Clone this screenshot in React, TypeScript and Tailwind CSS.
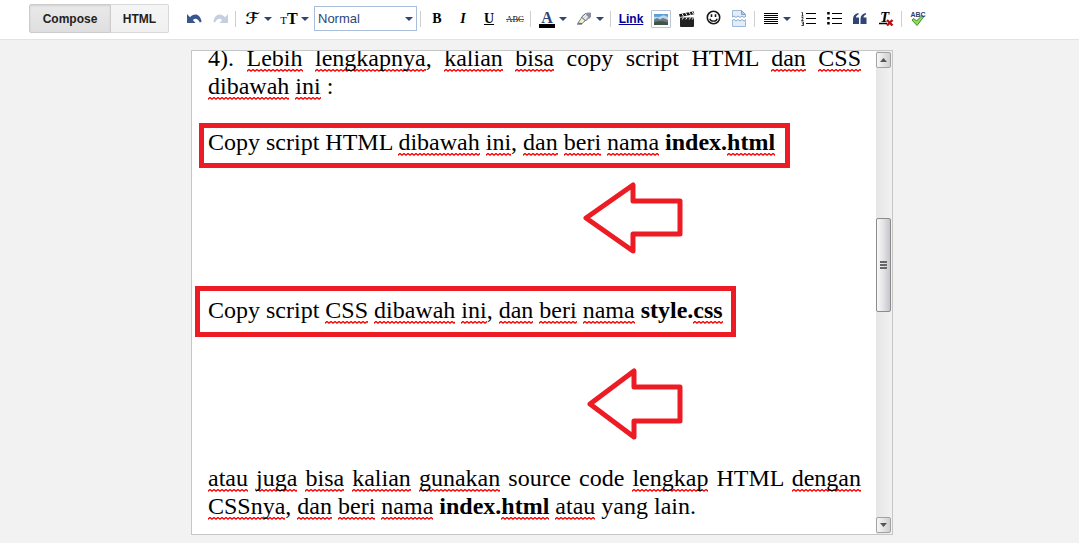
import type { ReactNode } from "react";

const NAVY = "#2f4575";

function Separator() {
  return <span className="ml-0.5 mr-[3px] h-4 w-px shrink-0 bg-[#cfcfcf]" />;
}

function Tool({ label, children }: { label: string; children: ReactNode }) {
  return (
    <button type="button" aria-label={label} className="flex h-6 w-[26px] shrink-0 items-center justify-center">
      {children}
    </button>
  );
}

function Caret() {
  return (
    <svg width="8" height="4" viewBox="0 0 8 4" fill={NAVY} aria-hidden="true">
      <path d="M0 0h8L4 4z" />
    </svg>
  );
}

function MenuTool({ label, children }: { label: string; children: ReactNode }) {
  return (
    <button type="button" aria-label={label} className="flex h-6 w-[37px] shrink-0 items-center justify-end gap-1 pr-1">
      <span className="flex w-4 justify-center">{children}</span>
      <Caret />
    </button>
  );
}

function Undo({ color }: { color: string }) {
  return (
    <svg width="15" height="10" viewBox="0 0 15 10" fill={color}>
      <path d="M0 0v9h8.500L5.800 6C8 3.800 11 4 12.800 8.500l1.800-.8C13.800 2.800 11 .6 8.500.6 6.300.6 4.500 1.700 3 3.200z" />
    </svg>
  );
}

function ListIcon({ numbered }: { numbered?: boolean }) {
  return (
    <svg width="15" height="15" viewBox="0 0 15 15">
      <path d="M5 2.500h10M5 7.500h10M5 12.500h10" stroke="#000" strokeWidth="1" />
      {numbered ? (
        <path
          d="M.5 1.500h1V5M.5 5h2M.5 6.500h1.500v1L.5 9.500h2M.5 11h2v3.500h-2M1 12.800h1"
          fill="none"
          stroke="#222"
          strokeWidth=".9"
        />
      ) : (
        <path d="M.2 1h2.500v2.500H.2zM.2 6h2.500v2.500H.2zM.2 11h2.500v2.500H.2z" fill="#000" />
      )}
    </svg>
  );
}

function Toolbar() {
  return (
    <header className="flex items-center overflow-hidden border-b border-[#e3e3e3] bg-white pb-1.5 pl-[29px] pt-1">
      <div className="flex h-[29px] shrink-0 text-xs font-bold text-[#222]">
        <button
          type="button"
          aria-pressed="true"
          className="w-[82px] rounded-l-xs border border-[#cccccc] bg-linear-to-b from-[#e9e9e9] to-[#dfdfdf] shadow-[inset_0_1px_2px_rgba(0,0,0,0.1)]"
        >
          Compose
        </button>
        <button
          type="button"
          className="w-[58px] rounded-r-xs border border-l-0 border-[#d8d8d8] bg-linear-to-b from-[#f5f5f5] to-[#f0f0f0]"
        >
          HTML
        </button>
      </div>

      <div className="ml-3 flex items-center">
        <Tool label="Undo">
          <Undo color="#39568f" />
        </Tool>
        <Tool label="Redo">
          <span className="-scale-x-100">
            <Undo color="#c6cfdf" />
          </span>
        </Tool>
        <Separator />
        <MenuTool label="Font">
          <span className="font-['DejaVu_Sans',sans-serif] text-base leading-none font-bold text-black">ℱ</span>
        </MenuTool>
        <MenuTool label="Font size">
          <span className="flex items-baseline font-['Liberation_Serif',serif] leading-none text-black">
            <span className="text-[11px] leading-none">T</span>
            <span className="text-base leading-none font-bold">T</span>
          </span>
        </MenuTool>
        <div className="relative mx-px shrink-0">
          <select
            aria-label="Paragraph format"
            className="block h-[25px] w-[103px] appearance-none border border-[#a9bedb] bg-white pl-[3px] text-[13px] text-[#2f4575]"
          >
            <option>Normal</option>
          </select>
          <span className="pointer-events-none absolute inset-y-0 right-1 flex items-center">
            <Caret />
          </span>
        </div>
        <Separator />
        <Tool label="Bold">
          <span className="font-['Liberation_Serif',serif] text-sm font-bold text-black">B</span>
        </Tool>
        <Tool label="Italic">
          <span className="font-['Liberation_Serif',serif] text-sm font-bold text-black italic">I</span>
        </Tool>
        <Tool label="Underline">
          <span className="font-['Liberation_Serif',serif] text-sm font-bold text-black underline">U</span>
        </Tool>
        <Tool label="Strikethrough">
          <svg width="18" height="14" viewBox="0 0 18 14">
            <text x="9" y="10" textAnchor="middle" fontFamily="Liberation Serif, serif" fontSize="8.500">
              ABC
            </text>
            <path d="M0 7.500h18" stroke="#3b5c9c" />
          </svg>
        </Tool>
        <Separator />
        <MenuTool label="Text color">
          <svg width="16" height="24" viewBox="0 0 16 24">
            <text x="8" y="16" textAnchor="middle" fontFamily="Liberation Serif, serif" fontSize="16" fontWeight="bold" fill={NAVY}>
              A
            </text>
            <path d="M0 17h16v4H0z" />
          </svg>
        </MenuTool>
        <MenuTool label="Highlight color">
          <svg width="14" height="14" viewBox="0 0 14 14">
            <path d="M1 11 5 5l3.500 3.500L5 11.500z" fill="#fbf3b4" stroke="#6e7fa3" />
            <path d="M4.500 5 8.500 1.500l4 3.500-4 4z" fill="#cfd4dc" stroke="#566480" />
            <path d="m8.500 1.500 2-1L14 .8v4L12 7z" fill="#8a8f99" />
            <path d="m6 5.500 3-3M7.500 7l3-3" stroke="#fff" />
            <path d="M0 12h5" stroke={NAVY} />
          </svg>
        </MenuTool>
        <Separator />
        <a href="#link" className="w-[34px] shrink-0 text-center text-xs font-bold text-[#000099] underline">
          Link
        </a>
        <Tool label="Insert image">
          <svg width="20" height="18" viewBox="0 0 20 18">
            <path d="M.5.5h19v17H.5z" fill="#fff" stroke="#bac6d6" />
            <path d="M3 4h14v11H3z" fill="#5d9fd6" />
            <path d="M3 7c3-1 4 1 7-1s5 0 7 1v4H3z" fill="#b9d6ea" />
            <path d="M3 9.500 6 8l3 1.500L12 8l5 2v3H3z" fill="#6d7a80" />
            <path d="M3 12.500c5-2 9-1 14 0V15H3z" fill="#3f5548" />
          </svg>
        </Tool>
        <Tool label="Insert video">
          <svg width="16" height="16" viewBox="0 0 16 16">
            <path d="M1 6.500h14V15q0 1-1 1H2q-1 0-1-1z" fill="#222" />
            <path d="M0 3.200 14.500.2l.8 3L.8 6z" fill="#151515" />
            <path
              d="m3 2.500 1.500 2.700M6.500 1.800 8 4.500M10 1l1.500 2.700M13 .5l1.500 2.500M4.500 6.500l-1.200 2M8 6.500l-1.200 2M11.500 6.500l-1.200 2M14.500 6.500l-1.200 2"
              stroke="#fff"
              strokeWidth="1"
            />
          </svg>
        </Tool>
        <Tool label="Insert special characters">
          <svg width="15" height="17" viewBox="0 0 15 17" fill="none" stroke="#151515">
            <circle cx="7.500" cy="7.500" r="6.200" strokeWidth="1.600" />
            <path d="M5.500 4.300V7M9.500 4.300V7" strokeWidth="1.600" />
            <path d="M3.800 8.800c1 3.200 6.400 3.200 7.400 0" strokeWidth="1.300" />
          </svg>
        </Tool>
        <Tool label="Insert jump break">
          <svg width="14" height="17" viewBox="0 0 14 17">
            <path d="M.5.5h9l4 4v12H.5z" fill="#e3edf8" stroke="#9db8d8" />
            <path d="M9.500.5v4h4z" fill="#b7cde6" stroke="#7fa3cc" />
            <path d="M0 7h14v3.500H0z" fill="#fff" />
            <path
              d="m0 7 2-1 2 1.500L6 6l2 1.500L10 6l2 1.500L14 6M0 10.500 2 9.500l2 1.500 2-1.500L8 11l2-1.500 2 1.500 2-1.500"
              fill="none"
              stroke="#86a8cf"
            />
          </svg>
        </Tool>
        <Separator />
        <MenuTool label="Alignment">
          <svg width="14" height="12" viewBox="0 0 14 12">
            <path d="M0 .5h14M0 2.500h14M0 4.500h14M0 6.500h14M0 8.500h14M0 10.500h14" stroke="#000" />
          </svg>
        </MenuTool>
        <Tool label="Numbered list">
          <ListIcon numbered />
        </Tool>
        <Tool label="Bullet list">
          <ListIcon />
        </Tool>
        <Tool label="Quote">
          <svg width="14" height="11" viewBox="0 0 14 11" fill={NAVY}>
            <path d="M5.500 0v1.500C4 2 3 3 3 4.500h3V11H0V6c0-3.500 2-5.500 5.500-6z" />
            <path d="M13 0v1.500c-1.500.5-2.500 1.500-2.500 3h3V11h-6V6c0-3.500 2-5.500 5.500-6z" />
          </svg>
        </Tool>
        <Tool label="Remove formatting">
          <svg width="18" height="22" viewBox="0 0 18 22">
            <text x="3" y="14" fontFamily="Liberation Serif, serif" fontSize="15" fontWeight="bold" fontStyle="italic">
              T
            </text>
            <path d="M2 15.500h8" stroke="#000" strokeWidth="1.500" />
            <path d="m10 12 5.500 5.500M15.500 12 10 17.500" stroke="#b40f0f" strokeWidth="2.400" />
          </svg>
        </Tool>
        <Separator />
        <Tool label="Check spelling">
          <svg width="16" height="20" viewBox="0 0 16 20">
            <path d="m2 11 2-1.500 2.500 2.500L12 6.500l2 1L7 16.500z" fill="#8edb55" stroke="#3f8f2a" />
            <text x="8" y="8" textAnchor="middle" fontFamily="Liberation Sans, sans-serif" fontSize="7" fontWeight="bold" fill="#2c3f70">
              ABC
            </text>
          </svg>
        </Tool>
      </div>
    </header>
  );
}

/* A word underlined with the spell checker's red zigzag. */
function W({ children }: { children: ReactNode }) {
  return (
    <span className="bg-[url('data:image/svg+xml,%3Csvg%20xmlns=%22http://www.w3.org/2000/svg%22%20width=%224%22%20height=%223%22%3E%3Cpath%20d=%22M-1%203L2%20.5L5%203%22%20fill=%22none%22%20stroke=%22%23f00000%22%20stroke-width=%221.3%22/%3E%3C/svg%3E')] bg-[position:left_bottom] bg-repeat-x pb-px">
      {children}
    </span>
  );
}

function Arrow({ points }: { points: string }) {
  return (
    <svg width="104" height="74" viewBox="0 0 104 74" className="ml-[374px]" aria-hidden="true">
      <polygon points={points} fill="none" stroke="#ed1c24" strokeWidth="5" strokeLinejoin="round" />
    </svg>
  );
}

function Scrollbar() {
  const button =
    "flex h-4 w-[15px] items-center justify-center rounded-[2px] border border-[#a2a2a2] bg-linear-to-r from-[#f7f7f7] to-[#cfcfd2]";
  return (
    <div className="flex w-4 shrink-0 flex-col bg-linear-to-r from-[#e6e6e6] to-[#f1f1f1] py-px">
      <button type="button" aria-label="Scroll up" className={button}>
        <svg width="7" height="4" viewBox="0 0 7 4" fill="#555">
          <path d="M0 4h7L3.500 0z" />
        </svg>
      </button>
      <div className="flex-[150]" />
      <div className="flex h-[94px] w-[15px] flex-col items-center justify-center gap-px rounded-[2px] border border-[#8b8b8b] bg-linear-to-r from-[#f8f8f8] via-[#e3e3e6] to-[#c6c6cb]">
        <span className="h-0.5 w-[7px] bg-[#666]" />
        <span className="h-0.5 w-[7px] bg-[#666]" />
        <span className="h-0.5 w-[7px] bg-[#666]" />
      </div>
      <div className="flex-[205]" />
      <button type="button" aria-label="Scroll down" className={button}>
        <svg width="7" height="4" viewBox="0 0 7 4" fill="#555">
          <path d="M0 0h7L3.500 4z" />
        </svg>
      </button>
    </div>
  );
}

export default function App() {
  return (
    <div className="min-h-screen bg-[#f2f2f2] font-['Liberation_Sans',Arial,sans-serif]">
      <Toolbar />
      <main className="pb-2 pl-[5px] pt-2.5">
        <div className="mx-auto flex w-full max-w-[702px] overflow-hidden border border-[#c6c6c6] bg-white">
          <article className="-mt-[7px] min-w-0 flex-1 pb-3.5 pl-4 pr-[15px] font-['Liberation_Serif','Times_New_Roman',serif] text-2xl leading-7 text-black">
            <p className="mb-7 text-justify">
              4). <W>Lebih</W> <W>lengkapnya</W>, <W>kalian</W> <W>bisa</W> copy script HTML <W>dan</W> <W>CSS</W>{" "}
              <W>dibawah</W> <W>ini</W> :
            </p>
            <p className="relative w-fit">
              Copy script HTML <W>dibawah</W> <W>ini</W>, <W>dan</W> <W>beri</W> <W>nama</W>{" "}
              <b>
                index.<W>html</W>
              </b>
              <span className="absolute -top-[5px] -right-[15px] -bottom-3 -left-[9px] border-5 border-[#ed1c24]" />
            </p>
            <div className="h-[140px] pt-[25px]">
              <Arrow points="4,37 51,4 51,20 98,20 98,53 51,53 51,70" />
            </div>
            <p className="relative w-fit">
              Copy script <W>CSS</W> <W>dibawah</W> <W>ini</W>, <W>dan</W> <W>beri</W> <W>nama</W>{" "}
              <b>
                style.<W>css</W>
              </b>
              <span className="absolute -top-2.5 -right-[13px] -bottom-[13px] -left-[13px] border-5 border-[#ed1c24]" />
            </p>
            <div className="h-[140px] pt-[43px]">
              <Arrow points="8,37 52,4 52,20 98,20 98,54 52,54 52,70" />
            </div>
            <p className="text-justify">
              <W>atau</W> <W>juga</W> <W>bisa</W> <W>kalian</W> <W>gunakan</W> source code <W>lengkap</W> HTML{" "}
              <W>dengan</W> <W>CSSnya</W>, <W>dan</W> <W>beri</W> <W>nama</W>{" "}
              <b>
                index.<W>html</W>
              </b>{" "}
              <W>atau</W> yang lain.
            </p>
          </article>
          <Scrollbar />
        </div>
      </main>
    </div>
  );
}
